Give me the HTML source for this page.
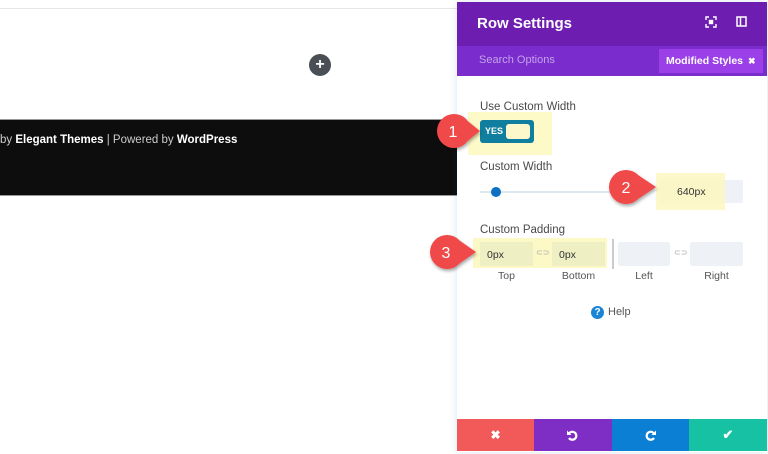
<!DOCTYPE html>
<html><head><style>
*{margin:0;padding:0;box-sizing:border-box}
body{width:768px;height:454px;overflow:hidden;background:#fff;font-family:"Liberation Sans",sans-serif;position:relative}
.a{position:absolute}
.lbl{font-size:11.5px;color:#4a4a4a}
.inp{background:#eef2f6;border-radius:2px}
.sub{font-size:10.5px;color:#555;text-align:center}
</style></head><body>
<div class="a" style="left:0;top:8px;width:457px;height:1px;background:#e6e6e6"></div>
<div class="a" style="left:309px;top:54px;width:22px;height:22px;border-radius:50%;background:#4a4f55;color:#fff;font-size:16px;line-height:21px;text-align:center;font-weight:bold">+</div>
<div class="a" style="left:0;top:119px;width:457px;height:77px;background:#0d0d0d;border-top:1px solid #999;border-bottom:1px solid #999"></div>
<div class="a" style="left:0;top:134px;font-size:11.5px;color:#ccc;white-space:nowrap">by <b style="color:#fff">Elegant Themes</b> | Powered by <b style="color:#fff">WordPress</b></div>

<div class="a" style="left:457px;top:2px;width:310px;height:450px;background:#fff;box-shadow:0 0 8px rgba(0,80,160,.15)"></div>
<div class="a" style="left:457px;top:2px;width:310px;height:44px;background:#6d1eb0"></div>
<div class="a" style="left:477px;top:15px;font-size:15px;font-weight:bold;color:#fff">Row Settings</div>
<svg class="a" style="left:705px;top:16px" width="12" height="12" viewBox="0 0 12 12" fill="none" stroke="#fff" stroke-width="1.4"><path d="M1 4V1H4M8 1H11V4M11 8V11H8M4 11H1V8"/><rect x="4.5" y="4.5" width="3" height="3" fill="#fff"/></svg>
<svg class="a" style="left:736px;top:16px" width="11" height="11" viewBox="0 0 11 11" fill="none" stroke="#fff" stroke-width="1.5"><rect x="1" y="1" width="9" height="9"/><path d="M4.5 1V10"/></svg>
<div class="a" style="left:457px;top:46px;width:310px;height:30px;background:#7b2ccc"></div>
<div class="a" style="left:479px;top:54px;font-size:11px;color:#c3a2ec">Search Options</div>
<div class="a" style="left:659px;top:49px;width:104px;height:24px;background:#9b3fe8;color:#fff;font-size:10.5px;font-weight:bold;line-height:24px;padding-left:7px;white-space:nowrap">Modified Styles<span style="position:absolute;left:89px;font-size:9px">✖</span></div>

<div class="a lbl" style="left:480px;top:101px">Use Custom Width</div>
<div class="a" style="left:468px;top:112px;width:84px;height:43px;background:#fdfac8"></div>
<div class="a" style="left:480px;top:120px;width:54px;height:23px;background:#0f7e9f;border-radius:3px"></div>
<div class="a" style="left:485px;top:126px;font-size:9px;font-weight:bold;color:#fff">YES</div>
<div class="a" style="left:506px;top:124px;width:24px;height:15px;background:#fdf7cc;border-radius:3px"></div>

<div class="a lbl" style="left:480px;top:161px">Custom Width</div>
<div class="a" style="left:480px;top:191px;width:130px;height:2px;background:#dfe6ee"></div>
<div class="a" style="left:491px;top:187px;width:10px;height:10px;border-radius:50%;background:#0c71c3"></div>
<div class="a inp" style="left:659px;top:180px;width:84px;height:23px"></div>
<div class="a" style="left:656px;top:173px;width:69px;height:37px;background:#fbf7c0;opacity:.85"></div>
<div class="a" style="left:677px;top:186px;font-size:10.5px;color:#333">640px</div>

<div class="a lbl" style="left:480px;top:224px">Custom Padding</div>
<div class="a" style="left:473px;top:238px;width:134px;height:30px;background:#fcf9c6"></div>
<div class="a" style="left:480px;top:242px;width:53px;height:24px;background:#eef0c4"></div>
<div class="a" style="left:552px;top:242px;width:53px;height:24px;background:#eef0c4"></div>
<div class="a" style="left:487px;top:249px;font-size:10.5px;color:#333">0px</div>
<div class="a" style="left:559px;top:249px;font-size:10.5px;color:#333">0px</div>
<div class="a" style="left:536px;top:248px;font-size:8px;color:#aaa">⊂⊃</div>
<div class="a" style="left:612px;top:239px;width:2px;height:30px;background:#ccc"></div>
<div class="a inp" style="left:618px;top:242px;width:52px;height:24px"></div>
<div class="a inp" style="left:690px;top:242px;width:53px;height:24px"></div>
<div class="a" style="left:674px;top:248px;font-size:8px;color:#aaa">⊂⊃</div>
<div class="a sub" style="left:480px;top:270px;width:53px">Top</div>
<div class="a sub" style="left:552px;top:270px;width:53px">Bottom</div>
<div class="a sub" style="left:618px;top:270px;width:52px">Left</div>
<div class="a sub" style="left:690px;top:270px;width:53px">Right</div>

<div class="a" style="left:591px;top:306px;width:13px;height:13px;border-radius:50%;background:#1a84d6;color:#fff;font-size:10px;font-weight:bold;text-align:center;line-height:13px">?</div>
<div class="a" style="left:608px;top:306px;font-size:11px;color:#555">Help</div>

<div class="a" style="left:457px;top:419px;width:77px;height:32px;background:#f25959;color:#fff;text-align:center;line-height:32px;font-size:12px;font-weight:bold">✖</div>
<div class="a" style="left:534px;top:419px;width:78px;height:32px;background:#7e2ec4"></div>
<div class="a" style="left:612px;top:419px;width:77px;height:32px;background:#0b7fd4"></div>
<div class="a" style="left:689px;top:419px;width:78px;height:32px;background:#17c1a3;color:#fff;text-align:center;line-height:32px;font-size:13px;font-weight:bold">✔</div>
<svg class="a" style="left:566px;top:429px" width="13" height="13" viewBox="0 0 13 13" fill="none" stroke="#fff" stroke-width="2.2"><path d="M3 4.5A4 4 0 1 1 3 9"/><path d="M1 1.5L1 6L5.5 6Z" fill="#fff" stroke="none"/></svg>
<svg class="a" style="left:644px;top:429px" width="13" height="13" viewBox="0 0 13 13" fill="none" stroke="#fff" stroke-width="2.2"><path d="M10 4.5A4 4 0 1 0 10 9"/><path d="M12 1.5L12 6L7.5 6Z" fill="#fff" stroke="none"/></svg>

<svg class="a" style="left:0;top:0" width="768" height="454">
<defs><filter id="s"><feDropShadow dx="1" dy="2" stdDeviation="1.5" flood-opacity=".35"/></filter></defs>
<g fill="#f04848" filter="url(#s)">
<circle cx="454" cy="131" r="17"/><path d="M460 115L480 131L460 147Z"/>
<circle cx="626" cy="187" r="17"/><path d="M632 171L656 187L632 203Z"/>
<circle cx="447" cy="252" r="17"/><path d="M453 236L476 252L453 268Z"/>
</g>
<g fill="#fff" font-family="Liberation Sans" font-size="16" text-anchor="middle">
<text x="453" y="137">1</text><text x="626" y="193">2</text><text x="446" y="258">3</text>
</g>
</svg>
</body></html>
